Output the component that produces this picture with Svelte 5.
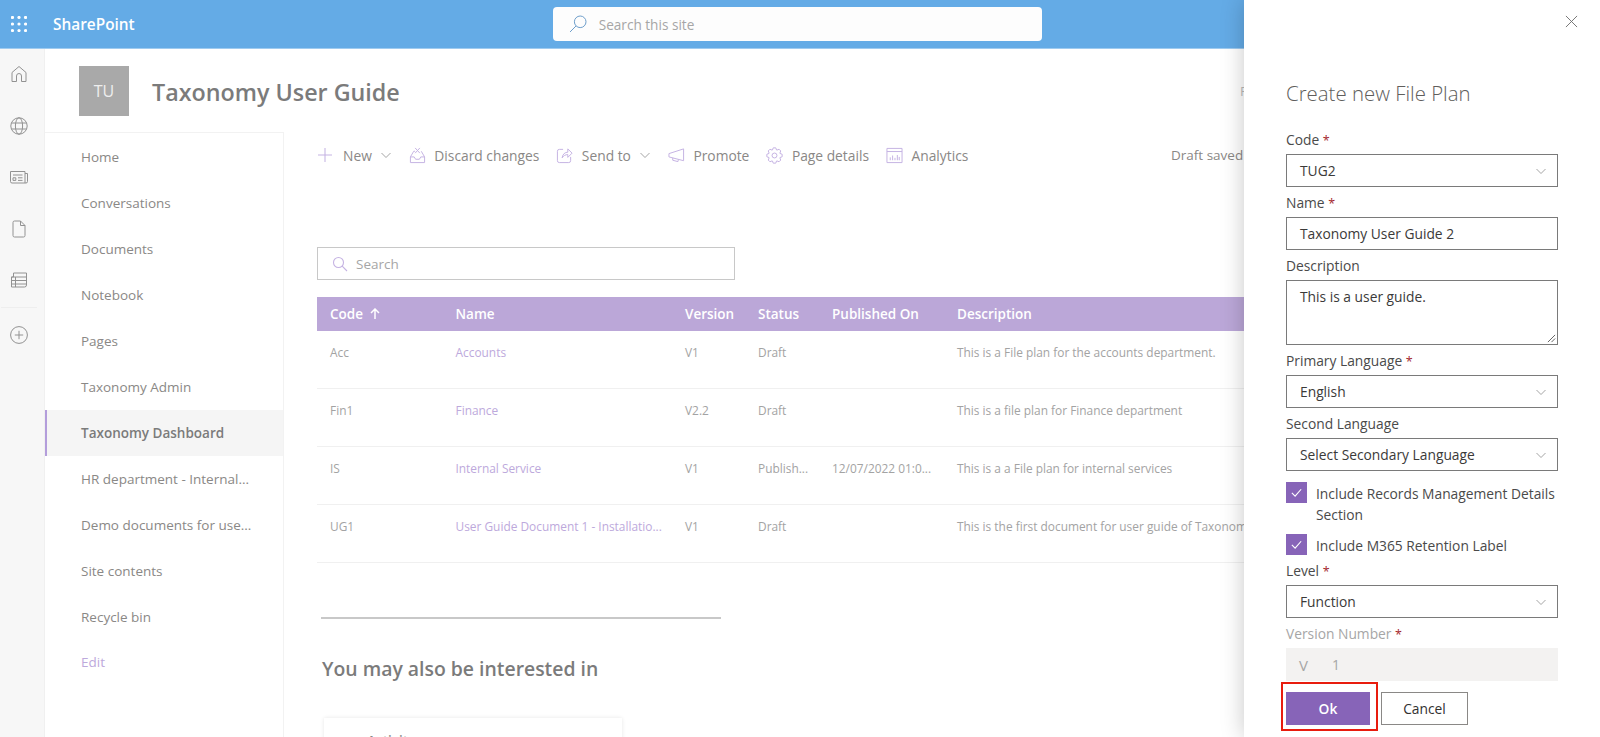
<script>
  const navItems = [
    'Home', 'Conversations', 'Documents', 'Notebook', 'Pages', 'Taxonomy Admin',
    'Taxonomy Dashboard', 'HR department - Internal...', 'Demo documents for use...',
    'Site contents', 'Recycle bin'
  ];

  const rows = [
    { code: 'Acc', name: 'Accounts', version: 'V1', status: 'Draft', published: '', description: 'This is a File plan for the accounts department.' },
    { code: 'Fin1', name: 'Finance', version: 'V2.2', status: 'Draft', published: '', description: 'This is a file plan for Finance department' },
    { code: 'IS', name: 'Internal Service', version: 'V1', status: 'Publish...', published: '12/07/2022 01:0...', description: 'This is a a File plan for internal services' },
    { code: 'UG1', name: 'User Guide Document 1 - Installatio...', version: 'V1', status: 'Draft', published: '', description: 'This is the first document for user guide of Taxonomy' }
  ];

  // gear outline: 8 teeth round the centre of an 18 box
  function gearPath() {
    const pts = [];
    for (let i = 0; i < 8; ++i) {
      const a = (i * Math.PI) / 4;
      for (const [r, d] of [[6.2, -0.36], [8.2, -0.16], [8.2, 0.16], [6.2, 0.36]]) {
        pts.push((9 + r * Math.cos(a + d)).toFixed(2) + ' ' + (9 + r * Math.sin(a + d)).toFixed(2));
      }
    }
    return 'M' + pts.join(' L') + ' Z';
  }
</script>

{#snippet chevron()}
  <svg class="chevron" viewBox="0 0 12 12"><path d="M1.5 4 L6 8.5 L10.5 4" /></svg>
{/snippet}

{#snippet select(value)}
  <div class="box select"><span>{value}</span>{@render chevron()}</div>
{/snippet}

{#snippet req(text, dim)}
  <div class="label" class:dim>{text} <span class="star">*</span></div>
{/snippet}

<div class="page">
  <header class="topbar">
    <svg class="waffle" viewBox="0 0 16 16">
      {#each [1.5, 8, 14.5] as y}
        {#each [1.5, 8, 14.5] as x}
          <circle cx={x} cy={y} r="1.6" />
        {/each}
      {/each}
    </svg>
    <span class="brand">SharePoint</span>
    <div class="sitesearch">
      <svg viewBox="0 0 18 18"><circle cx="11.2" cy="6.8" r="5.8" /><path d="M7 11 L1 17" /></svg>
      <span>Search this site</span>
    </div>
  </header>

  <div class="shell">
    <aside class="rail">
      <svg viewBox="0 0 20 20"><path d="M3 17.5 V8.5 L10 2.5 L17 8.5 V17.5 H12.5 V12 a2.5 2.5 0 0 0 -5 0 V17.5 Z" /></svg>
      <svg viewBox="0 0 20 20"><circle cx="10" cy="10" r="8.2" /><ellipse cx="10" cy="10" rx="3.6" ry="8.2" /><path d="M2.5 7 H17.5 M2.5 13 H17.5" /></svg>
      <svg viewBox="0 0 20 20"><path d="M1.5 4.5 H16 V16 H3 a1.5 1.5 0 0 1 -1.5 -1.5 Z M16 6.5 H18.5 V14.5 a1.5 1.5 0 0 1 -1.5 1.5 H16" /><path d="M4 8 H13.5 M4 10.8 H6.8 V13.4 H4 Z M9 10.8 H13.5 M9 13.4 H13.5" /></svg>
      <svg viewBox="0 0 20 20"><path d="M4 3.5 a1.5 1.5 0 0 1 1.5 -1.5 H11.5 L16 6.5 V16.5 a1.5 1.5 0 0 1 -1.5 1.5 H5.5 a1.5 1.5 0 0 1 -1.5 -1.5 Z M11.5 2 V6.5 H16" /></svg>
      <svg viewBox="0 0 20 20"><path d="M4.5 3 H17.5 V15 a2 2 0 0 1 -2 2 H2.5 V7 H4.5 Z M2.5 7 H17.5 M2.5 10.5 H17.5 M2.5 14 H17.5 M6.5 7 V17" /></svg>
      <div class="rail-line"></div>
      <svg viewBox="0 0 20 20"><circle cx="10" cy="10" r="8.4" /><path d="M10 5.8 V14.2 M5.8 10 H14.2" /></svg>
    </aside>

    <div class="content">
      <div class="sitehead">
        <div class="logo">TU</div>
        <h1>Taxonomy User Guide</h1>
        <span class="privacy">Private group</span>
      </div>

      <div class="below">
        <nav class="sitenav">
          {#each navItems as item}
            <div class="navitem" class:active={item === 'Taxonomy Dashboard'}>{item}</div>
          {/each}
          <div class="navitem edit">Edit</div>
        </nav>

        <main class="main">
          <div class="commands">
            <button class="cmd">
              <svg class="plus" viewBox="0 0 16 16"><path d="M8 1 V15 M1 8 H15" /></svg>New{@render chevron()}
            </button>
            <button class="cmd">
              <svg viewBox="0 0 18 18"><path d="M1.5 10.5 L5 4.5 H6.5 M13 4.5 L16.5 10.5 V16.5 H1.5 V10.5 H5.5 L7 13 H11 L12.5 10.5 H16.5 M6.5 1 L11.5 6.5 M11.5 1 L6.5 6.5" /></svg>Discard changes
            </button>
            <button class="cmd">
              <svg viewBox="0 0 18 18"><path d="M7.5 2.5 H3.5 a2 2 0 0 0 -2 2 V14.5 a2 2 0 0 0 2 2 H13.5 a2 2 0 0 0 2 -2 V10.5 M6.5 11.5 C7 7.5 9.5 5.5 12.5 5.5 V2 L17 6.5 L12.5 11 V8 C10 8 8 9.2 6.5 11.5 Z" /></svg>Send to{@render chevron()}
            </button>
            <button class="cmd">
              <svg viewBox="0 0 18 18"><path d="M1 7 L16.5 2 V14.5 L1 10.5 Z M5 11.5 L5 14 L10.5 15.5 L11 13.2" /></svg>Promote
            </button>
            <button class="cmd">
              <svg viewBox="0 0 18 18"><circle cx="9" cy="9" r="2.6" /><path d={gearPath()} /></svg>Page details
            </button>
            <button class="cmd">
              <svg viewBox="0 0 18 18"><path d="M1 1.5 H17 V16.5 H1 Z M1 4.8 H17 M4.5 14 V11 M7 14 V9 M9.5 14 V11.5 M12 14 V8.5 M14 14 V10.5" /></svg>Analytics
            </button>
            <span class="draft">Draft saved 12:45 PM</span>
          </div>

          <div class="tablesearch">
            <svg viewBox="0 0 16 16"><circle cx="6.5" cy="6.5" r="5" /><path d="M10.2 10.2 L15 15" /></svg>
            <span>Search</span>
          </div>

          <div class="table">
            <div class="row head">
              <div class="sorted">Code <svg viewBox="0 0 10 11"><path d="M5 11 V1 M1 5 L5 1 L9 5" /></svg></div>
              <div>Name</div>
              <div>Version</div>
              <div>Status</div>
              <div>Published On</div>
              <div>Description</div>
            </div>
            {#each rows as r}
              <div class="row item">
                <div>{r.code}</div>
                <div class="link">{r.name}</div>
                <div>{r.version}</div>
                <div>{r.status}</div>
                <div>{r.published}</div>
                <div>{r.description}</div>
              </div>
            {/each}
          </div>

          <div class="rule"></div>
          <h2>You may also be interested in</h2>
          <div class="card"><span>Activity</span></div>
        </main>
      </div>
    </div>
  </div>

  <section class="panel">
    <div class="panel-top">
      <svg class="close" viewBox="0 0 14 14"><path d="M1 1 L13 13 M13 1 L1 13" /></svg>
    </div>
    <form class="form">
      <h3>Create new File Plan</h3>

      <div class="field first">
        {@render req('Code')}
        {@render select('TUG2')}
      </div>
      <div class="field">
        {@render req('Name')}
        <div class="box">Taxonomy User Guide 2</div>
      </div>
      <div class="field">
        <div class="label">Description</div>
        <div class="box area">
          This is a user guide.
          <svg class="grip" viewBox="0 0 10 10"><path d="M9 1 L1 9 M9 5 L5 9" /></svg>
        </div>
      </div>
      <div class="field">
        {@render req('Primary Language')}
        {@render select('English')}
      </div>
      <div class="field">
        <div class="label">Second Language</div>
        {@render select('Select Secondary Language')}
      </div>

      <div class="check first-check">
        <span class="tick"><svg viewBox="0 0 14 14"><path d="M2 7.5 L5.5 11 L12 3.5" /></svg></span>
        <span class="checktext">Include Records Management Details Section</span>
      </div>
      <div class="check">
        <span class="tick"><svg viewBox="0 0 14 14"><path d="M2 7.5 L5.5 11 L12 3.5" /></svg></span>
        <span class="checktext">Include M365 Retention Label</span>
      </div>

      <div class="field">
        {@render req('Level')}
        {@render select('Function')}
      </div>
      <div class="field">
        {@render req('Version Number', true)}
        <div class="box disabled"><span class="prefix">V</span><span>1</span></div>
      </div>

      <div class="actions">
        <div class="callout"><button type="button" class="btn ok">Ok</button></div>
        <button type="button" class="btn cancel">Cancel</button>
      </div>
    </form>
  </section>
</div>

<style>
  :global(body) {
    margin: 0;
    background: #fff;
  }
  .page {
    position: relative;
    width: 1600px;
    height: 737px;
    overflow: hidden;
    font-family: "Open Sans", "Liberation Sans", sans-serif;
    font-size: 13.5px;
    color: #8a8886;
  }
  svg {
    fill: none;
    flex: none;
  }

  .topbar {
    display: flex;
    align-items: center;
    height: 49px;
    background: #64abe6;
    box-sizing: border-box;
    border-bottom: 1px solid #9fcbf0;
    padding-left: 11px;
    color: #fff;
  }
  .waffle {
    width: 16px;
    height: 16px;
    fill: #fff;
  }
  .brand {
    margin-left: 26px;
    font-size: 15.4px;
    font-weight: 600;
  }
  .sitesearch {
    display: flex;
    align-items: center;
    box-sizing: border-box;
    width: 489px;
    height: 34px;
    margin-left: 418px;
    padding-left: 16px;
    background: #fdfdfd;
    border-radius: 4px;
    color: #a6a6a6;
    font-size: 13.6px;
  }
  .sitesearch svg {
    width: 18px;
    height: 18px;
    margin-right: 12px;
    stroke: #6f9fcb;
    stroke-width: 1;
  }

  .shell {
    display: flex;
    height: 688px;
  }
  .rail {
    display: flex;
    flex-direction: column;
    align-items: center;
    flex: none;
    box-sizing: border-box;
    width: 45px;
    padding: 15px 6px 0 0;
    background: #f7f7f7;
    border-right: 1px solid #f0f0f0;
  }
  .rail svg {
    width: 20px;
    height: 20px;
    margin-bottom: 31.5px;
    stroke: #929292;
    stroke-width: 1;
  }
  .rail-line {
    width: 36px;
    height: 1px;
    margin: -15px 0 17px;
    background: #eeeeee;
  }

  .content {
    flex: 1;
    min-width: 0;
  }
  .sitehead {
    display: flex;
    align-items: center;
    box-sizing: border-box;
    height: 83px;
    padding: 0 260px 0 34px;
  }
  .logo {
    display: flex;
    align-items: center;
    justify-content: center;
    width: 50px;
    height: 50px;
    background: #a9a9a9;
    color: #eeeeee;
    font-size: 16px;
  }
  h1 {
    margin: 3px 0 0 23px;
    font-size: 23.3px;
    font-weight: 600;
    color: #7b7b7b;
  }
  .privacy {
    width: 100px;
    margin-left: auto;
    white-space: nowrap;
    color: #bbbbbb;
  }

  .below {
    display: flex;
  }
  .sitenav {
    flex: none;
    box-sizing: border-box;
    width: 239px;
    height: 605px;
    padding-top: 1px;
    border-top: 1px solid #f2f2f2;
    border-right: 1px solid #f2f2f2;
  }
  .navitem {
    display: flex;
    align-items: center;
    box-sizing: border-box;
    height: 46px;
    padding-left: 36px;
    white-space: nowrap;
  }
  .navitem.active {
    padding-left: 34px;
    background: #f5f5f5;
    border-left: 2px solid #b39ddb;
    font-weight: 600;
    color: #7b7b7b;
  }
  .navitem.edit {
    height: 44px;
    color: #bda9dc;
  }

  .main {
    flex: 1;
    min-width: 0;
    padding-left: 33px;
  }
  .commands {
    display: flex;
    align-items: center;
    height: 46px;
    padding-right: 229px;
    font-size: 13.8px;
  }
  .cmd {
    display: flex;
    align-items: center;
    height: 32px;
    margin-right: 17px;
    padding: 0;
    border: 0;
    background: none;
    font: inherit;
    color: inherit;
    white-space: nowrap;
  }
  .cmd > svg:first-child {
    width: 17px;
    height: 17px;
    margin-right: 8.5px;
    stroke: #c5b3e3;
    stroke-width: 1.05;
  }
  .cmd > svg.plus {
    width: 16px;
    height: 16px;
    margin-right: 10px;
  }
  .chevron {
    width: 12px;
    height: 12px;
    margin-left: 8px;
    stroke: #9a9a9a;
    stroke-width: 0.9;
  }
  .draft {
    width: 200px;
    margin-left: auto;
    font-size: 13.5px;
    white-space: nowrap;
  }

  .tablesearch {
    display: flex;
    align-items: center;
    box-sizing: border-box;
    width: 418px;
    height: 33px;
    margin-top: 69px;
    padding-left: 14px;
    border: 1px solid #c8c8c8;
    color: #a6a6a6;
  }
  .tablesearch svg {
    width: 16px;
    height: 16px;
    margin-right: 8px;
    stroke: #c5b3e3;
    stroke-width: 1.1;
  }

  .table {
    margin-top: 17px;
  }
  .row {
    display: grid;
    grid-template-columns: 125.5px 229.5px 73px 74px 125px 1fr;
    white-space: nowrap;
  }
  .row > div {
    padding-left: 13px;
    overflow: hidden;
  }
  .head {
    align-items: center;
    height: 34px;
    background: #bba7d8;
    color: #fff;
    font-weight: 600;
    font-size: 13.5px;
  }
  .sorted svg {
    width: 10px;
    height: 11px;
    margin-left: 3px;
    stroke: #fff;
    stroke-width: 1.5;
  }
  .item {
    box-sizing: border-box;
    height: 58px;
    padding-top: 12.5px;
    border-bottom: 1px solid #f0f0f0;
    font-size: 11.9px;
    color: #a3a3a3;
  }
  .link {
    color: #bda9dc;
  }

  .rule {
    width: 400px;
    height: 2px;
    margin: 54px 0 0 4px;
    background: #c8c8c8;
  }
  h2 {
    margin: 36px 0 0 5px;
    font-size: 19.4px;
    line-height: 28px;
    font-weight: 600;
    color: #7b7b7b;
  }
  .card {
    width: 298px;
    height: 60px;
    margin: 35px 0 0 7px;
    padding: 14px 0 0 43px;
    box-sizing: border-box;
    box-shadow: 0 0 4px rgba(0, 0, 0, 0.1);
    font-weight: 600;
    color: #8a8886;
  }

  .panel {
    position: absolute;
    top: 0;
    right: 0;
    bottom: 0;
    width: 356px;
    background: #fff;
    box-shadow: 0 0 22px rgba(0, 0, 0, 0.22);
    color: #4a4a4a;
    font-size: 13.8px;
  }
  .panel-top {
    display: flex;
    justify-content: flex-end;
    padding: 15px 22px 0 0;
  }
  .close {
    width: 13px;
    height: 13px;
    stroke: #6e6e6e;
    stroke-width: 1;
  }
  .form {
    width: 272px;
    margin: 51px 0 0 42px;
  }
  h3 {
    margin: 0;
    font-size: 20.4px;
    line-height: 28px;
    font-weight: 300;
    color: #605e5c;
  }
  .field {
    margin-top: 5px;
  }
  .field.first {
    margin-top: 22px;
  }
  .label {
    height: 20px;
    line-height: 22px;
    margin-bottom: 5px;
  }
  .label.dim {
    color: #a6a6a6;
  }
  .star {
    color: #a4262c;
    font-size: 12.5px;
  }
  .box {
    display: flex;
    align-items: center;
    box-sizing: border-box;
    height: 33px;
    padding-left: 13px;
    border: 1px solid #7a7a7a;
    color: #3b3a39;
    white-space: nowrap;
  }
  .select {
    justify-content: space-between;
    padding-right: 10px;
  }
  .area {
    position: relative;
    align-items: flex-start;
    height: 65px;
    padding-top: 6px;
  }
  .grip {
    position: absolute;
    right: 1px;
    bottom: 1px;
    width: 9px;
    height: 9px;
    stroke: #555;
    stroke-width: 1;
  }
  .disabled {
    height: 33px;
    border: 0;
    background: #f3f2f1;
    color: #a6a6a6;
  }
  .prefix {
    width: 33px;
    font-size: 15px;
  }
  .check {
    display: flex;
    gap: 9px;
    margin-top: 10px;
    line-height: 21px;
  }
  .first-check {
    margin-top: 11px;
  }
  .checktext {
    padding-top: 1px;
    margin-bottom: -1px;
  }
  .tick {
    display: flex;
    align-items: center;
    justify-content: center;
    flex: none;
    width: 21px;
    height: 21px;
    background: #8764b8;
  }
  .tick svg {
    width: 13px;
    height: 13px;
    stroke: #fff;
    stroke-width: 1.2;
  }
  .actions {
    display: flex;
    align-items: flex-start;
    margin-top: 1px;
  }
  .callout {
    flex: none;
    margin-left: -5px;
    padding: 10px 8px 6px 5px;
    outline: 2px solid #e81c0e;
    outline-offset: -2px;
  }
  .btn {
    display: block;
    box-sizing: border-box;
    height: 33px;
    font: inherit;
    font-weight: 600;
  }
  .ok {
    width: 84px;
    border: 0;
    background: #8764b8;
    color: #fff;
  }
  .cancel {
    width: 87px;
    margin: 10px 0 0 3px;
    border: 1px solid #8a8886;
    background: #fff;
    color: #323130;
    font-weight: 500;
  }
</style>
